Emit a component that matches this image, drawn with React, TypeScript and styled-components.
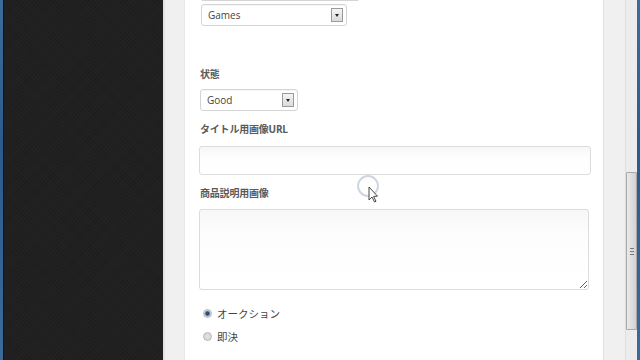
import styled, { createGlobalStyle } from 'styled-components';

const GlobalStyle = createGlobalStyle`
  html, body {
    margin: 0;
    padding: 0;
    overflow: hidden;
  }
  body {
    font-family: "Open Sans", "Noto Sans CJK JP", sans-serif;
  }
`

const Page = styled.div`
  display: flex;
  width: 640px;
  height: 360px;
  overflow: hidden;
  position: relative;`

const EdgeStrip = styled.div`
  width: 3px;
  flex: none;
  background: linear-gradient(to bottom, #3d6c9c, #2b5a8c 40%, #3a6b9b);`

const Sidebar = styled.div`
  width: 160px;
  flex: none;
  background-color: #202020;
  background-image:
    repeating-linear-gradient(45deg, rgba(255,255,255,0.012) 0 1px, transparent 1px 3px),
    repeating-linear-gradient(-45deg, rgba(0,0,0,0.08) 0 1px, transparent 1px 3px);
  border-left: 1px solid #151515;
  box-sizing: border-box;`

const Gutter = styled.div<{ $side: 'left' | 'right' }>`
  width: 22px;
  flex: none;
  background: #f0f0f0;
  box-sizing: border-box;
  ${p => p.$side === 'left'
    ? 'border-left: 2px solid #e2e2e2; border-right: 1px solid #e8e8e8;'
    : 'border-left: 1px solid #e2e2e2;'}`

const Content = styled.div`
  flex: 1;
  background: #fff;
  padding-left: 15px;
  display: flex;
  flex-direction: column;
  align-items: flex-start;`

const SelectBox = styled.div<{ $width: number }>`
  width: ${p => p.$width}px;
  height: 22px;
  box-sizing: border-box;
  border: 1px solid #d4d4d4;
  border-radius: 3px;
  background: #fff;
  box-shadow: inset 0 1px 1px rgba(0,0,0,0.04);
  display: flex;
  align-items: center;
  justify-content: space-between;
  padding: 0 3px 0 6px;
  font-size: 10px;
  color: #444;
  flex: none;`

const ArrowButton = styled.div`
  width: 12px;
  height: 14px;
  box-sizing: border-box;
  border: 1px solid #9a9a9a;
  background: linear-gradient(to bottom, #f4f4f4, #dadada);
  display: flex;
  align-items: center;
  justify-content: center;
  &::after {
    content: '';
    border-left: 2.5px solid transparent;
    border-right: 2.5px solid transparent;
    border-top: 3px solid #222;
  }`

const Label = styled.div<{ $top: number }>`
  margin-top: ${p => p.$top}px;
  height: 16px;
  line-height: 16px;
  font-size: 10px;
  font-weight: 700;
  color: #5a5a5a;
  letter-spacing: -0.2px;`

const TextInput = styled.input`
  margin-top: 9px;
  margin-left: -1px;
  width: 392px;
  height: 29px;
  box-sizing: border-box;
  border: 1px solid #dcdcdc;
  border-radius: 3px;
  background: linear-gradient(to bottom, #f7f7f7, #fdfdfd 40%, #fff);
  outline: none;
  flex: none;`

const TextArea = styled.textarea`
  margin-top: 8px;
  margin-left: -1px;
  width: 390px;
  height: 81px;
  box-sizing: border-box;
  border: 1px solid #dcdcdc;
  border-radius: 3px;
  background: linear-gradient(to bottom, #f7f7f7, #fdfdfd 30%, #fff);
  outline: none;
  resize: both;
  flex: none;`

const RadioRow = styled.label<{ $top: number }>`
  margin-top: ${p => p.$top}px;
  height: 16px;
  display: flex;
  align-items: center;
  gap: 5px;
  padding-left: 3px;
  font-size: 10.5px;
  color: #444;`

const RadioDot = styled.span<{ $checked: boolean }>`
  width: 9px;
  height: 9px;
  border-radius: 50%;
  box-sizing: border-box;
  border: 1px solid #b8b8b8;
  background: ${p => p.$checked
    ? 'radial-gradient(circle, #2e4f73 0 1.8px, #6f93b6 2.2px, #dde6ee 3.5px)'
    : 'radial-gradient(circle, #e4e4e4, #cfcfcf)'};`

const Scrollbar = styled.div`
  width: 12px;
  flex: none;
  background: #ececec;
  border-left: 1px solid #dedede;
  box-sizing: border-box;
  padding-top: 172px;`

const Thumb = styled.div`
  height: 158px;
  box-sizing: border-box;
  border: 1px solid #a9a9a9;
  border-radius: 1px;
  background: linear-gradient(to right, #eaeaea, #d2d2d2);
  display: flex;
  align-items: center;
  justify-content: center;
  &::after {
    content: '';
    width: 4px;
    height: 5px;
    border-top: 1px solid #777;
    border-bottom: 1px solid #777;
    background: linear-gradient(#777, #777) center / 4px 1px no-repeat;
  }`

const CursorOverlay = styled.svg`
  position: absolute;
  left: 356px;
  top: 174px;
  pointer-events: none;`

function BusyCursor() {
  return (
    <CursorOverlay width="26" height="30" viewBox="0 0 26 30">
      <circle cx="12" cy="12" r="10" fill="none" stroke="#ced6e2" strokeWidth="2" />
      <path d="M13 13 L13 26 L16 23 L18.5 28 L20 27.3 L17.6 22.4 L21.5 22.2 Z"
        fill="#fff" stroke="#333" strokeWidth="0.9" strokeLinejoin="round" />
    </CursorOverlay>
  )
}

export default function App() {
  return (
    <Page>
      <GlobalStyle />
      <EdgeStrip />
      <Sidebar />
      <Gutter $side="left" />
      <Content>
        <SelectBox $width={160} style={{ marginTop: -21 }} />
        <SelectBox $width={146} style={{ marginTop: 3, marginLeft: 1 }}>
          Games<ArrowButton />
        </SelectBox>
        <Label $top={40}>状態</Label>
        <SelectBox $width={98} style={{ marginTop: 7 }}>
          Good<ArrowButton />
        </SelectBox>
        <Label $top={10}>タイトル用画像URL</Label>
        <TextInput type="text" />
        <Label $top={10}>商品説明用画像</Label>
        <TextArea />
        <RadioRow $top={15}>
          <RadioDot $checked={true} />オークション
        </RadioRow>
        <RadioRow $top={7}>
          <RadioDot $checked={false} />即決
        </RadioRow>
      </Content>
      <Gutter $side="right" />
      <Scrollbar>
        <Thumb />
      </Scrollbar>
      <EdgeStrip />
      <BusyCursor />
    </Page>
  )
}
